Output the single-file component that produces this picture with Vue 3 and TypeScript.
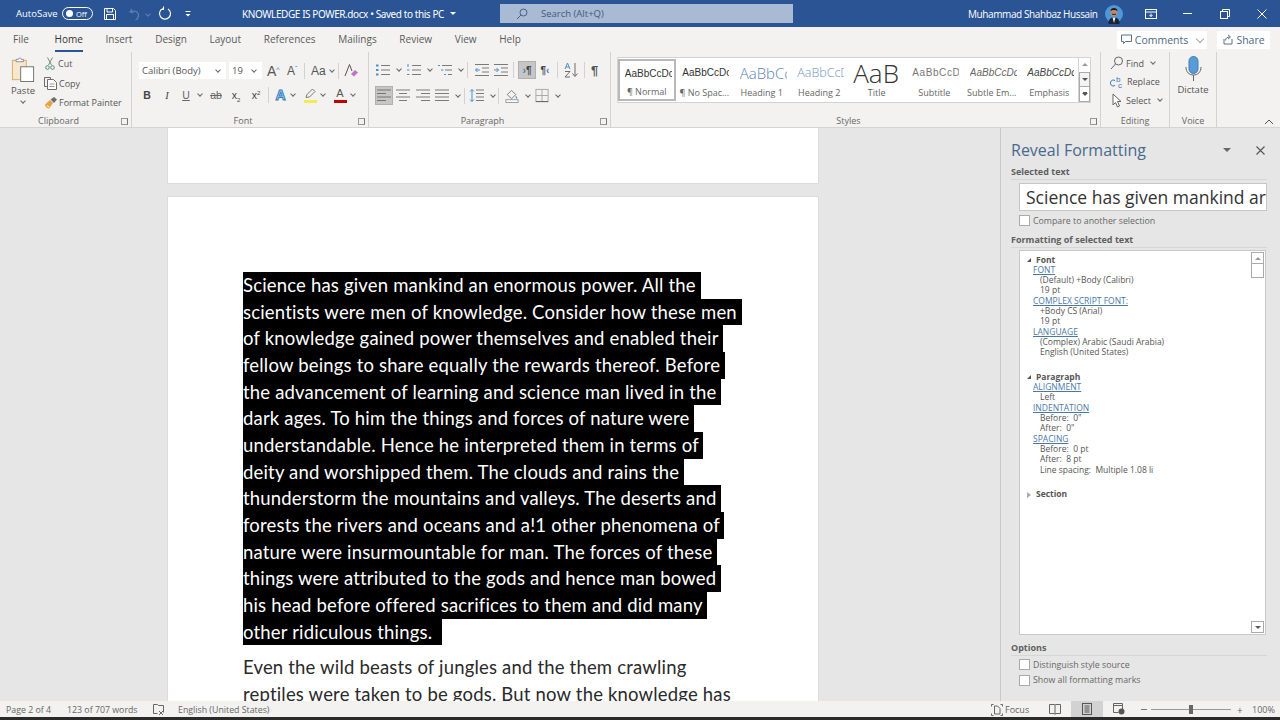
<script setup lang="ts">
const tabs = ['File', 'Home', 'Insert', 'Design', 'Layout', 'References', 'Mailings', 'Review', 'View', 'Help']

const styles = [
  { name: '¶ Normal', sample: 'AaBbCcDc', cls: 's-normal', active: true },
  { name: '¶ No Spac...', sample: 'AaBbCcDc', cls: 's-normal', active: false },
  { name: 'Heading 1', sample: 'AaBbCc', cls: 's-h1', active: false },
  { name: 'Heading 2', sample: 'AaBbCcD', cls: 's-h2', active: false },
  { name: 'Title', sample: 'AaB', cls: 's-title', active: false },
  { name: 'Subtitle', sample: 'AaBbCcD', cls: 's-sub', active: false },
  { name: 'Subtle Em...', sample: 'AaBbCcDc', cls: 's-em', active: false },
  { name: 'Emphasis', sample: 'AaBbCcDc', cls: 's-emph', active: false },
]

const selectedLines = [
  'Science has given mankind an enormous power. All the ',
  'scientists were men of knowledge. Consider how these men ',
  'of knowledge gained power themselves and enabled their ',
  'fellow beings to share equally the rewards thereof. Before ',
  'the advancement of learning and science man lived in the ',
  'dark ages. To him the things and forces of nature were ',
  'understandable. Hence he interpreted them in terms of ',
  'deity and worshipped them. The clouds and rains the ',
  'thunderstorm the mountains and valleys. The deserts and ',
  'forests the rivers and oceans and a!1 other phenomena of ',
  'nature were insurmountable for man. The forces of these ',
  'things were attributed to the gods and hence man bowed ',
  'his head before offered sacrifices to them and did many ',
  'other ridiculous things.  ',
]

const restLines = [
  'Even the wild beasts of jungles and the them crawling',
  'reptiles were taken to be gods. But now the knowledge has',
]

const fontDetails = [
  { text: 'FONT', link: true },
  { text: '(Default) +Body (Calibri)', link: false },
  { text: '19 pt', link: false },
  { text: 'COMPLEX SCRIPT FONT:', link: true },
  { text: '+Body CS (Arial)', link: false },
  { text: '19 pt', link: false },
  { text: 'LANGUAGE', link: true },
  { text: '(Complex) Arabic (Saudi Arabia)', link: false },
  { text: 'English (United States)', link: false },
]

const paragraphDetails = [
  { text: 'ALIGNMENT', link: true },
  { text: 'Left', link: false },
  { text: 'INDENTATION', link: true },
  { text: 'Before:  0"', link: false },
  { text: 'After:  0"', link: false },
  { text: 'SPACING', link: true },
  { text: 'Before:  0 pt', link: false },
  { text: 'After:  8 pt', link: false },
  { text: 'Line spacing:  Multiple 1.08 li', link: false },
]
</script>

<template>
  <div class="app">
    <header class="titlebar">
      <span class="autosave">AutoSave</span>
      <span class="toggle"><i class="toggle-dot"></i>Off</span>
      <svg class="tb-save" width="14" height="14" viewBox="0 0 14 14" fill="none" stroke="#fff" stroke-width="1">
        <path d="M1.5 1.5h9l2 2v9h-11z" />
        <path d="M4 1.5v3.5h5.5v-3.5M3.5 12.5v-5h7v5" />
      </svg>
      <svg class="tb-undo" width="14" height="14" viewBox="0 0 14 14" fill="none" stroke="#5f80b4" stroke-width="1.2">
        <path d="M4 2L2 5l3.500 1M2.500 5c4-2 8-.5 8 3.500 0 2-1 3.500-3 4.500" />
      </svg>
      <i class="chev tb-undo-chev"></i>
      <svg class="tb-redo" width="15" height="15" viewBox="0 0 15 15" fill="none" stroke="#fff" stroke-width="1.100">
        <path d="M5 2.500A5.500 5.500 0 1 0 10 3M5.500 0.500v3h-3" />
      </svg>
      <svg class="tb-custom" width="8" height="8" viewBox="0 0 8 8" fill="#fff">
        <rect x="1.500" y="1" width="5" height="1" />
        <path d="M1.500 4h5L4 6.500z" />
      </svg>
      <span class="doc-title">KNOWLEDGE IS POWER.docx &bull; Saved to this PC</span>
      <i class="chev-solid"></i>
      <div class="search">
        <svg width="12" height="12" viewBox="0 0 12 12" fill="none" stroke="#4a6186" stroke-width="1">
          <circle cx="7.500" cy="4.500" r="3.500" />
          <path d="M5 7L1 11" />
        </svg>
        <span>Search (Alt+Q)</span>
      </div>
      <span class="username">Muhammad Shahbaz Hussain</span>
      <svg class="avatar" width="18" height="20" viewBox="0 0 18 20">
        <circle cx="9" cy="10" r="9" fill="#4e97d8" />
        <path d="M3.500 20c0-5 2-6.500 5.500-6.500s5.500 1.500 5.500 6.500z" fill="#1b2433" />
        <path d="M7.500 13.500h3L9 19z" fill="#f2f2f2" />
        <ellipse cx="9" cy="8" rx="3.400" ry="4.600" fill="#b98a6b" />
        <path d="M5.500 7c0-4 7-4 7 0-1.500-1.500-5.500-1.500-7 0z" fill="#1a1a1a" />
        <rect x="7" y="9.800" width="4" height="1" fill="#2a2a2a" />
      </svg>
      <svg class="win-ribbon" width="12" height="10" viewBox="0 0 12 10" fill="none" stroke="#fff">
        <rect x="0.500" y="0.500" width="11" height="9" />
        <path d="M0.500 3h11M6 4.500v3M4.500 6L6 7.500 7.500 6" />
      </svg>
      <span class="win-min"></span>
      <svg class="win-restore" width="10" height="10" viewBox="0 0 10 10" fill="none" stroke="#fff">
        <rect x="0.500" y="2.500" width="7" height="7" />
        <path d="M2.500 2.500v-2h7v7h-2" />
      </svg>
      <svg class="win-close" width="10" height="10" viewBox="0 0 10 10" stroke="#fff">
        <path d="M0.500 0.500l9 9M9.500 0.500l-9 9" />
      </svg>
    </header>

    <nav class="tabs">
      <span v-for="t in tabs" :key="t" class="tab" :class="{ active: t === 'Home' }">{{ t }}</span>
      <div class="tab-actions">
        <button class="btn-comments">
          <svg width="11" height="11" viewBox="0 0 11 11" fill="none" stroke="#5c6f87">
            <path d="M0.500 1h10v6.500h-6l-2 2v-2h-2z" />
          </svg>
          Comments
          <i class="chev chev-light"></i>
        </button>
        <button class="btn-share">
          <svg width="11" height="11" viewBox="0 0 11 11" fill="none" stroke="#5c6f87">
            <path d="M2 5v5h8V5M3.500 6.500c0-2.500 2-3.500 4-3.500M6 0.800L8.500 3 6 5" />
          </svg>
          Share
        </button>
      </div>
    </nav>

    <section class="ribbon">
      <div class="group g-clipboard">
        <div class="group-body clip-body">
          <div class="paste">
            <svg width="24" height="26" viewBox="0 0 26 28" fill="none">
              <rect x="1.500" y="3.500" width="15" height="21" fill="#f6e8cf" stroke="#d9a860" />
              <path d="M5.500 5V2.500h2.500a1.500 1.500 0 0 1 3 0h2.500V5z" fill="#fff" stroke="#8a8a8a" />
              <rect x="10.500" y="10.500" width="14" height="16" fill="#fff" stroke="#6d6d6d" />
            </svg>
            <span>Paste</span>
            <i class="chev"></i>
          </div>
          <div class="clip-list">
            <div class="clip-item">
              <svg width="12" height="13" viewBox="0 0 12 13" fill="none" stroke="#7d8a7d">
                <path d="M3.500 0.500L7.500 8M8.500 0.500L4.500 8" />
                <circle cx="3.500" cy="10.500" r="1.800" stroke="#4f8f78" />
                <circle cx="8.500" cy="10.500" r="1.800" stroke="#4f8f78" />
              </svg>
              <span class="cut-t">Cut</span>
            </div>
            <div class="clip-item">
              <svg width="14" height="13" viewBox="0 0 14 13" fill="none" stroke="#6d6d6d">
                <path d="M3.500 9.500h-3v-9h6v2" />
                <path d="M3.500 2.500h6l3 3v7h-9z" fill="#fff" />
                <path d="M5.500 7h5M5.500 9.500h5" stroke="#9c9c9c" />
              </svg>
              <span>Copy</span>
            </div>
            <div class="clip-item">
              <svg width="14" height="13" viewBox="0 0 14 13">
                <path d="M1 8.500L6 4l3 3-4 5.500c-2 0-4-2-4-4z" fill="#e8a33d" />
                <path d="M6.500 3.500L10 1l3 2.500-3 3.500z" fill="#6d6d6d" />
                <path d="M3 9.500l2 1.500" stroke="#fff" />
              </svg>
              <span>Format Painter</span>
            </div>
          </div>
        </div>
        <div class="group-label">Clipboard<i class="launcher"></i></div>
      </div>

      <div class="group g-font">
        <div class="group-body stack">
          <div class="row row-top">
            <div class="combo combo-font">Calibri (Body)<i class="chev"></i></div>
            <div class="combo combo-size">19<i class="chev"></i></div>
            <span class="glyph big a-up">A<sup>^</sup></span>
            <span class="glyph mid a-down">A<sup>ˇ</sup></span>
            <i class="sep s-case"></i>
            <span class="glyph case">Aa</span><i class="chev"></i>
            <i class="sep s-clear"></i>
            <svg class="clear-i" width="15" height="15" viewBox="0 0 15 15" fill="none">
              <path d="M1 13L5.500 1.500 8 8" stroke="#555" />
              <path d="M7 11l4-4 3 2.500-4 4z" fill="#c074c8" />
            </svg>
          </div>
          <div class="row row-bottom">
            <span class="fmt bold">B</span>
            <span class="fmt ital">I</span>
            <span class="fmt under">U</span><i class="chev"></i>
            <span class="fmt strike">ab</span>
            <span class="fmt script">x<sub>2</sub></span>
            <span class="fmt script">x<sup>2</sup></span>
            <i class="sep s-effects"></i>
            <span class="fx">A</span><i class="chev"></i>
            <span class="col-a">
              <svg width="14" height="11" viewBox="0 0 14 11" fill="none" stroke="#7a7a7a">
                <path d="M3 9.500l1-3L9.500 1l2.500 2.500L6.500 9z" />
              </svg>
              <b class="bar yellow"></b>
            </span>
            <i class="chev"></i>
            <span class="col-a letter">A<b class="bar red"></b></span>
            <i class="chev"></i>
          </div>
        </div>
        <div class="group-label">Font<i class="launcher"></i></div>
      </div>

      <div class="group g-para">
        <div class="group-body stack">
          <div class="row para-top">
            <svg class="i" viewBox="0 0 16 14" fill="none" stroke="#666">
              <path d="M6 2.500h9M6 7h9M6 11.500h9" />
              <path d="M1 2.500h2.500M1 7h2.500M1 11.500h2.500" stroke="#2f7fc1" stroke-width="2" />
            </svg>
            <i class="chev"></i>
            <svg class="i" viewBox="0 0 16 14" fill="none" stroke="#666">
              <path d="M6 2.500h9M6 7h9M6 11.500h9" />
              <path d="M2 1v3M1 7h2.500M1 11.500h2.500" stroke="#2f7fc1" />
            </svg>
            <i class="chev"></i>
            <svg class="i" viewBox="0 0 16 14" fill="none" stroke="#666">
              <path d="M5 2.500h10M8 7h7M11 11.500h4" />
              <path d="M1 2.500h2M4 7h2.500M7 11.500h2" stroke="#2f7fc1" />
            </svg>
            <i class="chev"></i>
            <i class="sep s-indent"></i>
            <svg class="i" viewBox="0 0 16 14" fill="none" stroke="#666">
              <path d="M1 1.500h14M8 5h7M8 9h7M1 12.500h14" />
              <path d="M6 7H1.500M3.500 5l-2 2 2 2" stroke="#2f7fc1" />
            </svg>
            <svg class="i i-gap" viewBox="0 0 16 14" fill="none" stroke="#666">
              <path d="M1 1.500h14M8 5h7M8 9h7M1 12.500h14" />
              <path d="M1 7h4.500M3.500 5l2 2-2 2" stroke="#2f7fc1" />
            </svg>
            <i class="sep s-ltr"></i>
            <span class="pressed dir"><em class="arrow-b">›</em>¶</span>
            <span class="dir rtl">¶<em class="arrow-b">‹</em></span>
            <i class="sep s-sort"></i>
            <svg class="i sort" viewBox="0 0 16 16" fill="none">
              <path d="M12 1v13M9.500 11.500l2.500 3 2.500-3" stroke="#555" />
              <path d="M2 7l2.500-6L7 7M3 5h3" stroke="#2f7fc1" />
              <path d="M2 9.500h5L2 15h5" stroke="#555" />
            </svg>
            <i class="sep s-pil"></i>
            <span class="pil">¶</span>
          </div>
          <div class="row para-bottom">
            <span class="pressed align">
              <svg class="i" viewBox="0 0 16 14" fill="none" stroke="#666"><path d="M1 1.500h14M1 5h9M1 8.500h14M1 12h9" /></svg>
            </span>
            <svg class="i a-c" viewBox="0 0 16 14" fill="none" stroke="#666"><path d="M1 1.500h14M4 5h8M1 8.500h14M4 12h8" /></svg>
            <svg class="i a-r" viewBox="0 0 16 14" fill="none" stroke="#666"><path d="M1 1.500h14M6 5h9M1 8.500h14M6 12h9" /></svg>
            <svg class="i a-j" viewBox="0 0 16 14" fill="none" stroke="#666"><path d="M1 1.500h14M1 5h14M1 8.500h14M1 12h14" /></svg>
            <i class="chev"></i>
            <i class="sep s-line"></i>
            <svg class="i" viewBox="0 0 16 14" fill="none" stroke="#666">
              <path d="M7 1.500h8M7 5h8M7 8.500h8M7 12h8" />
              <path d="M3 1v12M1 3l2-2 2 2M1 11l2 2 2-2" stroke="#2f7fc1" />
            </svg>
            <i class="chev"></i>
            <i class="sep s-shade"></i>
            <svg class="i" viewBox="0 0 16 16" fill="none">
              <path d="M3 7l4.500-4.500L12 7l-4.500 4.500z" stroke="#666" />
              <path d="M12 8c1 1.500 2 2 1.500 3s-2 .5-1.500-3z" fill="#2f7fc1" />
              <rect x="1.500" y="12.500" width="13" height="3" stroke="#888" fill="#fff" />
            </svg>
            <i class="chev"></i>
            <svg class="i i-border" viewBox="0 0 16 16" fill="none" stroke="#9a9a9a">
              <rect x="1.500" y="1.500" width="13" height="13" />
              <path d="M8 1.500v13M1.500 8h13" />
              <path d="M1.500 14.500h13" stroke="#444" />
            </svg>
            <i class="chev"></i>
          </div>
        </div>
        <div class="group-label">Paragraph<i class="launcher"></i></div>
      </div>

      <div class="group g-styles">
        <div class="group-body gallery-wrap">
          <div class="gallery">
            <div v-for="s in styles" :key="s.name + s.cls" class="style-cell" :class="{ selected: s.active }">
              <span class="style-sample" :class="s.cls">{{ s.sample }}</span>
              <span class="style-name">{{ s.name }}</span>
            </div>
            <div class="gallery-scroll">
              <span class="up"><i class="tri-up"></i></span>
              <span class="mid-b"><i class="tri-down"></i></span>
              <span class="more"><i class="tri-more"></i></span>
            </div>
          </div>
        </div>
        <div class="group-label">Styles<i class="launcher"></i></div>
      </div>

      <div class="group g-edit">
        <div class="group-body edit-list">
          <div class="edit-item">
            <svg width="14" height="14" viewBox="0 0 14 14" fill="none" stroke="#666">
              <circle cx="8.500" cy="5" r="4" />
              <path d="M5.500 8L1 13" />
            </svg>
            <span>Find</span><i class="chev"></i>
          </div>
          <div class="edit-item replace">
            <svg width="14" height="14" viewBox="0 0 14 14" fill="none">
              <path d="M5 5.500a3 3 0 1 0 0 5" stroke="#2f7fc1" />
              <text x="6" y="7" font-size="8" fill="#2f7fc1" font-family="Liberation Sans">b</text>
              <text x="8" y="13" font-size="8" fill="#2f7fc1" font-family="Liberation Sans">c</text>
            </svg>
            <span>Replace</span>
          </div>
          <div class="edit-item">
            <svg width="14" height="15" viewBox="0 0 14 15" fill="#fff" stroke="#666">
              <path d="M3 1l8 7.500H7.500l2 4.500-2 1-2-4.500L3 12z" />
            </svg>
            <span>Select</span><i class="chev"></i>
          </div>
        </div>
        <div class="group-label plain">Editing</div>
      </div>

      <div class="group g-voice">
        <div class="group-body voice">
          <svg width="18" height="26" viewBox="0 0 18 26" fill="none">
            <rect x="5" y="0.500" width="9" height="17" rx="4.500" fill="#5b9bd5" stroke="#3f7fb8" />
            <path d="M2 11c0 5 3 8 7.500 8s7.500-3 7.500-8M9.500 19v6" stroke="#666" />
          </svg>
          <span>Dictate</span>
        </div>
        <div class="group-label plain">Voice</div>
      </div>

      <svg class="collapse" width="10" height="6" viewBox="0 0 10 6" fill="none" stroke="#555">
        <path d="M1 5l4-4 4 4" />
      </svg>
    </section>

    <main class="workspace">
      <div class="doc-area">
        <div class="page page-prev"></div>
        <div class="page page-cur">
          <div class="para para-sel">
            <span v-for="(l, i) in selectedLines" :key="i" class="sel-line">{{ l }}</span>
          </div>
          <div class="para">
            <span v-for="(l, i) in restLines" :key="i" class="plain-line">{{ l }}</span>
          </div>
        </div>
      </div>

      <aside class="pane">
        <div class="pane-head">
          <h2>Reveal Formatting</h2>
          <i class="chev-solid dark"></i>
          <svg width="9" height="9" viewBox="0 0 9 9" stroke="#555" stroke-width="1.100">
            <path d="M0.500 0.500l8 8M8.500 0.500l-8 8" />
          </svg>
        </div>

        <h3 class="pane-sec">Selected text</h3>
        <div class="sample-box">Science has given mankind ar</div>
        <label class="check compare"><i class="box"></i>Compare to another selection</label>

        <h3 class="pane-sec fmt-sec">Formatting of selected text</h3>
        <div class="details">
          <div class="details-inner">
            <div class="d-head"><i class="tri-open"></i>Font</div>
            <div v-for="d in fontDetails" :key="d.text + 'f'" :class="d.link ? 'd-link' : 'd-val'">{{ d.text }}</div>
            <div class="d-head d-next"><i class="tri-open"></i>Paragraph</div>
            <div v-for="d in paragraphDetails" :key="d.text + 'p'" :class="d.link ? 'd-link' : 'd-val'">{{ d.text }}</div>
            <div class="d-head d-next"><i class="tri-closed"></i>Section</div>
          </div>
          <div class="details-scroll">
            <span class="sb-btn"><i class="tri-up"></i></span>
            <span class="sb-thumb"></span>
            <span class="sb-space"></span>
            <span class="sb-btn"><i class="tri-down"></i></span>
          </div>
        </div>

        <h3 class="pane-sec opt-sec">Options</h3>
        <label class="check opt"><i class="box"></i>Distinguish style source</label>
        <label class="check opt"><i class="box"></i>Show all formatting marks</label>
      </aside>
    </main>

    <footer class="status">
      <span class="st-page">Page 2 of 4</span>
      <span class="st-words">123 of 707 words</span>
      <svg class="st-proof" width="11" height="12" viewBox="0 0 11 12" fill="none" stroke="#666">
        <path d="M0.500 0.500h4l1 1h5v7M0.500 0.500v9h4" />
        <path d="M6 7l4 4M10 7l-4 4" />
      </svg>
      <span class="st-lang">English (United States)</span>
      <div class="st-right">
        <svg width="12" height="12" viewBox="0 0 12 12" fill="none" stroke="#666">
          <path d="M3.500 2h3l2.500 2.500V10h-5.500z" />
          <path d="M0.500 2.500v-2h2M11.500 2.500v-2h-2M0.500 9.500v2h2M11.500 9.500v2h-2" />
        </svg>
        <span class="st-focus">Focus</span>
        <span class="view-btn v-read">
          <svg width="12" height="11" viewBox="0 0 12 11" fill="none" stroke="#666">
            <path d="M0.500 0.500h5l.5 1 .5-1h5v9h-5l-.5 1-.5-1h-5zM6 1.500v8" />
          </svg>
        </span>
        <span class="view-btn v-print">
          <svg width="10" height="12" viewBox="0 0 10 12" fill="none" stroke="#555">
            <rect x="0.500" y="0.500" width="9" height="11" />
            <path d="M2.500 3h5M2.500 5h5M2.500 7h5M2.500 9h5" />
          </svg>
        </span>
        <span class="view-btn v-web">
          <svg width="12" height="12" viewBox="0 0 12 12" fill="none" stroke="#666">
            <path d="M0.500 0.500h9v6M0.500 0.500v9h5M0.500 2.500h9" />
            <circle cx="8.500" cy="8.500" r="3" fill="#555" stroke="none" />
          </svg>
        </span>
        <span class="zoom-minus"></span>
        <div class="slider"><i class="thumb"></i></div>
        <span class="zoom-plus">+</span>
        <span class="zoom-val">100%</span>
      </div>
    </footer>
    <div class="bottom-strip"></div>
  </div>
</template>

<style scoped>
.app {
  width: 1280px;
  height: 720px;
  display: flex;
  flex-direction: column;
  overflow: hidden;
  font-family: "Open Sans", "Liberation Sans", sans-serif;
  color: #555;
  background: #e6e6e6;
}
i {
  display: block;
  font-style: normal;
  flex: none;
}
.chev {
  width: 3px;
  height: 3px;
  border-right: 1px solid #666;
  border-bottom: 1px solid #666;
  transform: rotate(45deg);
}
.chev-light {
  width: 5px;
  height: 5px;
  border-color: #a8a8a8;
}
.chev-solid {
  width: 0;
  height: 0;
  border-left: 3px solid transparent;
  border-right: 3px solid transparent;
  border-top: 3px solid #fff;
}
.chev-solid.dark {
  border-top-color: #666;
  border-left-width: 4px;
  border-right-width: 4px;
  border-top-width: 4px;
}

/* title bar */
.titlebar {
  height: 27px;
  flex: none;
  display: flex;
  align-items: center;
  background: #2a5494;
  color: #fff;
  padding-left: 16px;
  font-size: 10.500px;
}
.autosave {
  width: 46px;
  font-size: 9.500px;
}
.toggle {
  width: 31px;
  height: 13px;
  border: 1px solid #fff;
  border-radius: 7px;
  display: flex;
  align-items: center;
  gap: 3px;
  padding-left: 3px;
  box-sizing: border-box;
  font-size: 7.500px;
}
.toggle-dot {
  width: 7px;
  height: 7px;
  border-radius: 50%;
  background: #fff;
}
.tb-save { margin-left: 10px; }
.tb-undo { margin-left: 11px; }
.tb-undo-chev {
  margin-left: 4px;
  border-color: #5f80b4;
}
.tb-redo { margin-left: 8px; }
.tb-custom { margin-left: 11px; }
.doc-title {
  margin-left: 50px;
  font-family: "Noto Sans", sans-serif;
  font-size: 10px;
  letter-spacing: -0.420px;
  width: 208px;
  white-space: nowrap;
}
.search {
  margin-left: 44px;
  width: 293px;
  height: 19px;
  background: #a9bad4;
  display: flex;
  align-items: center;
  gap: 13px;
  padding-left: 16px;
  box-sizing: border-box;
  color: #44597c;
  font-size: 9.500px;
}
.username {
  margin-left: 175px;
  width: 130px;
  white-space: nowrap;
  font-size: 10px;
  letter-spacing: -0.400px;
}
.avatar { margin-left: 7px; }
.win-ribbon { margin-left: 22px; }
.win-min {
  width: 9px;
  height: 1px;
  background: #fff;
  margin-left: 26px;
}
.win-restore { margin-left: 28px; }
.win-close { margin-left: 27px; }

/* tabs */
.tabs {
  height: 25px;
  flex: none;
  display: flex;
  align-items: center;
  gap: 22.700px;
  padding-left: 13px;
  background: #f3f2f1;
  font-size: 10px;
  color: #5a5a5a;
}
.tab {
  height: 25px;
  line-height: 25px;
  box-sizing: border-box;
  white-space: nowrap;
}
.tab.active {
  color: #333;
  border-bottom: 2px solid #2a5494;
  margin-left: 3px;
}
.tab-actions {
  margin-left: auto;
  display: flex;
  gap: 10px;
  padding-right: 10px;
}
.tab-actions button {
  height: 18px;
  border: 0;
  background: #fff;
  font-family: inherit;
  font-size: 10.500px;
  color: #4f6785;
  display: flex;
  align-items: center;
  gap: 3px;
  padding: 0;
}
.btn-comments {
  width: 90px;
  justify-content: center;
}
.btn-comments .chev { margin: -2px 0 0 6px; }
.btn-share {
  width: 53px;
  justify-content: center;
}

/* ribbon */
.ribbon {
  height: 76px;
  flex: none;
  display: flex;
  position: relative;
  background: #f3f2f1;
  border-bottom: 1px solid #d4d4d4;
  box-sizing: border-box;
  font-size: 9.500px;
}
.group {
  display: flex;
  flex-direction: column;
  border-right: 1px solid #d3d2d0;
  box-sizing: border-box;
}
.group-body { flex: 1; min-height: 0; }
.group-label {
  height: 14px;
  line-height: 16px;
  text-align: center;
  position: relative;
  font-size: 9px;
  color: #666;
  padding-right: 14px;
}
.launcher {
  position: absolute;
  right: 3px;
  top: 5px;
  width: 7px;
  height: 7px;
  border: 1px solid #999;
  border-right-color: #777;
  box-sizing: border-box;
}
.g-clipboard { width: 132px; }
.g-font { width: 237px; }
.g-para { width: 242px; }
.g-styles { width: 490px; }
.g-edit { width: 69px; }
.g-voice { width: 47px; }

/* clipboard */
.clip-body {
  display: flex;
  padding-left: 10px;
}
.paste {
  width: 26px;
  display: flex;
  flex-direction: column;
  align-items: center;
  padding-top: 5px;
  font-size: 9.500px;
}
.paste span { margin-top: 1px; line-height: 14px; }
.paste .chev { margin-top: 1px; }
.clip-list {
  margin-left: 8px;
  display: flex;
  flex-direction: column;
  padding-top: 2px;
  font-size: 9px;
}
.clip-item {
  height: 19.500px;
  display: flex;
  align-items: center;
  gap: 1px;
  white-space: nowrap;
}
.cut-t { margin-left: 1px; }

/* shared stacks */
.stack {
  display: flex;
  flex-direction: column;
}
.row {
  display: flex;
  align-items: center;
}
.sep {
  width: 1px;
  height: 16px;
  background: #d3d2d0;
}

/* font group */
.row-top {
  margin-top: 10px;
  height: 17px;
  padding-left: 7px;
}
.combo {
  height: 17px;
  background: #fff;
  display: flex;
  align-items: center;
  justify-content: space-between;
  box-sizing: border-box;
  padding: 0 6px 0 3px;
  font-size: 9.500px;
  color: #555;
}
.combo .chev { margin-top: -2px; }
.combo-font { width: 87px; }
.combo-size {
  width: 33px;
  margin-left: 3px;
}
.glyph {
  font-family: "Liberation Sans", sans-serif;
  color: #555;
  line-height: 1;
}
.glyph sup {
  font-size: 7px;
  vertical-align: 4px;
  line-height: 0;
  color: #2f7fc1;
}
.big { font-size: 14px; margin-left: 5px; width: 18px; }
.mid { font-size: 12px; margin-left: 2px; width: 16px; }
.s-case { margin: 0 6px 0 1px; }
.case { font-size: 12px; width: 17px; }
.row-top .chev { margin: -2px 0 0 2px; }
.s-clear { margin: 0 5px 0 4px; }
.row-bottom {
  margin-top: 7px;
  height: 18px;
  padding-left: 5px;
}
.row-bottom .chev { margin: -2px 3px 0 3px; }
.fmt {
  width: 20px;
  text-align: center;
  font-family: "Liberation Sans", sans-serif;
  font-size: 10.500px;
  color: #444;
}
.bold { font-weight: 700; }
.ital { font-family: "Liberation Serif", serif; font-style: italic; }
.under {
  text-decoration: underline;
  width: 18px;
  color: #666;
}
.strike {
  text-decoration: line-through;
  margin-left: 1px;
  color: #666;
}
.script sub, .script sup {
  font-size: 6px;
  line-height: 0;
}
.s-effects { margin: 0 4px 0 2px; }
.fx {
  width: 15px;
  text-align: center;
  font-family: "Liberation Sans", sans-serif;
  font-weight: 700;
  font-size: 14px;
  color: #bcd8f0;
  -webkit-text-stroke: 1px #2f7fc1;
}
.col-a {
  width: 16px;
  margin-left: 4px;
  display: flex;
  flex-direction: column;
  align-items: center;
  line-height: 1;
}
.letter {
  font-family: "Liberation Sans", sans-serif;
  font-size: 11px;
  color: #555;
}
.bar {
  display: block;
  width: 13px;
  height: 3px;
  margin-top: 1px;
}
.yellow { background: #f4ec4f; }
.red { background: #c00000; }

/* paragraph group */
.i {
  width: 16px;
  height: 14px;
  flex: none;
  opacity: 0.85;
}
.para-top {
  margin-top: 9px;
  height: 18px;
  padding-left: 6px;
}
.para-top .chev, .para-bottom .chev { margin: -2px 5px 0 6px; }
.s-indent { margin: 0 6px 0 -1px; }
.i-gap { margin-left: 3px; }
.s-ltr { margin: 0 4px 0 4px; }
.pressed {
  background: #c6c6c6;
  border: 1px solid #b0b0b0;
  box-sizing: border-box;
}
.dir {
  width: 18px;
  height: 18px;
  display: flex;
  align-items: center;
  justify-content: center;
  font-size: 10px;
  font-weight: 700;
  color: #444;
  font-family: "Liberation Sans", sans-serif;
}
.rtl { margin-left: 0; }
.arrow-b {
  color: #2f7fc1;
  font-style: normal;
}
.s-sort { margin: 0 5px 0 3px; }
.sort { height: 16px; }
.s-pil { margin: 0 6px 0 5px; }
.pil {
  font-family: "Liberation Sans", sans-serif;
  font-weight: 700;
  font-size: 13px;
  color: #555;
}
.para-bottom {
  margin-top: 7px;
  height: 19px;
  padding-left: 6px;
}
.align {
  width: 18px;
  height: 19px;
  display: flex;
  align-items: center;
  justify-content: center;
}
.a-c { margin-left: 2px; }
.a-r { margin-left: 4px; }
.a-j { margin-left: 3px; }
.s-line { margin: 0 4px 0 -1px; }
.s-shade { margin: 0 5px 0 -2px; }
.para-bottom .i { height: 15px; }
.i-border { margin-left: -1px; }

/* styles gallery */
.gallery-wrap { padding: 5px 0 0 6px; }
.gallery {
  width: 474px;
  height: 46px;
  background: #fff;
  border: 1px solid #d3d3d3;
  display: flex;
  box-sizing: border-box;
}
.style-cell {
  width: 57.500px;
  flex: none;
  box-sizing: border-box;
  display: flex;
  flex-direction: column;
  align-items: center;
  overflow: hidden;
  padding-top: 2px;
}
.style-cell.selected {
  border: 2px solid #b9b9b9;
  padding-top: 0;
  height: 42px;
  margin-top: 1px;
}
.style-sample {
  height: 26px;
  line-height: 26px;
  white-space: nowrap;
  width: 47px;
  margin-left: 3px;
  overflow: hidden;
  text-align: left;
  color: #333;
  font-family: "Liberation Sans", sans-serif;
  font-size: 10px;
}
.style-name {
  font-size: 9px;
  line-height: 14px;
  margin-top: 0;
  color: #666;
  white-space: nowrap;
}
.s-h1 { font-size: 15px; color: #5a7fb5; font-family: "Open Sans", sans-serif; font-weight: 300; }
.s-h2 { font-size: 12.500px; color: #7393c0; font-family: "Open Sans", sans-serif; font-weight: 300; }
.s-title { font-size: 26px; color: #333; width: 50px; font-family: "Open Sans", sans-serif; font-weight: 300; }
.s-sub { color: #777; letter-spacing: 0.600px; }
.s-em { color: #666; font-style: italic; }
.s-emph { color: #444; font-style: italic; }
.gallery-scroll {
  width: 11px;
  margin-left: auto;
  display: flex;
  flex-direction: column;
  border-left: 1px solid #d3d3d3;
  box-sizing: content-box;
}
.gallery-scroll span {
  flex: 1;
  display: flex;
  align-items: center;
  justify-content: center;
  background: #fff;
}
.gallery-scroll .mid-b {
  border: 1px solid #aaa;
  background: #f3f3f3;
}
.gallery-scroll .more {
  border: 1px solid #aaa;
  border-top: 0;
}
.tri-up, .tri-down, .tri-more {
  width: 0;
  height: 0;
  border-left: 3px solid transparent;
  border-right: 3px solid transparent;
}
.tri-up { border-bottom: 3px solid #999; }
.tri-down { border-top: 3px solid #555; }
.tri-more { border-top: 3px solid #555; box-shadow: 0 -2px 0 -1px #555; }

/* editing */
.edit-list {
  display: flex;
  flex-direction: column;
  padding: 2px 0 0 9px;
  font-size: 9px;
}
.edit-item {
  height: 18.500px;
  display: flex;
  align-items: center;
  gap: 2px;
}
.edit-item .chev { margin: -2px 0 0 5px; }
.replace span { margin-left: 1px; }
.voice {
  display: flex;
  flex-direction: column;
  align-items: center;
  padding-top: 4px;
}
.voice span { line-height: 12px; margin-top: 2px; }
.group-label.plain { font-size: 9px; padding-right: 0; }
.collapse {
  position: absolute;
  right: 6px;
  bottom: 2px;
}

/* document */
.workspace {
  flex: 1;
  min-height: 0;
  display: flex;
}
.doc-area {
  width: 1000px;
  flex: none;
  overflow: hidden;
  padding-right: 14px;
  box-sizing: border-box;
  display: flex;
  flex-direction: column;
  align-items: center;
  background: #e6e6e6;
}
.page {
  width: 652px;
  flex: none;
  background: #fff;
  box-sizing: border-box;
  border: 1px solid #dcdcdc;
}
.page-prev {
  height: 56px;
  border-top: 0;
}
.page-cur {
  margin-top: 12px;
  padding: 75px 0 0 75px;
  height: 800px;
}
.para {
  font-family: "Lato", "Liberation Sans", sans-serif;
  font-size: 18.500px;
  letter-spacing: 0.180px;
  line-height: 26.650px;
  color: #2a2a2a;
  margin-bottom: 9px;
}
.sel-line, .plain-line {
  display: block;
  white-space: pre;
  width: fit-content;
}
.sel-line {
  background: #000;
  color: #fff;
}

/* reveal formatting pane */
.pane {
  flex: 1;
  min-width: 0;
  border-left: 1px solid #c8c8c8;
  display: flex;
  flex-direction: column;
  padding: 0 13px 0 10px;
  background: #e6e6e6;
}
.pane-head {
  height: 36px;
  display: flex;
  align-items: center;
  padding-top: 8px;
  box-sizing: border-box;
}
.pane-head h2 {
  margin: 0;
  font-weight: 400;
  font-size: 16px;
  line-height: 20px;
  color: #486a8c;
  flex: 1;
}
.pane-head .chev-solid { margin-right: 25px; }
.pane-head svg { margin-right: 2px; }
.pane-sec {
  margin: 0;
  font-size: 9px;
  line-height: 12px;
  font-weight: 700;
  color: #5f5f5f;
  border-bottom: 1px solid #d6d6d6;
  height: 13px;
  box-sizing: content-box;
  padding-top: 2px;
}
.sample-box {
  margin: 3px 0 0 8px;
  height: 28px;
  background: #fff;
  border: 1px solid #c6c6c6;
  box-sizing: border-box;
  line-height: 26px;
  padding-left: 6px;
  font-size: 17.500px;
  white-space: nowrap;
  overflow: hidden;
  color: #333;
}
.check {
  display: flex;
  align-items: center;
  gap: 3px;
  font-size: 8.800px;
  color: #666;
  margin-left: 8px;
}
.box {
  width: 9px;
  height: 9px;
  background: #fff;
  border: 1px solid #aaa;
}
.compare {
  margin-top: 4px;
  height: 11px;
}
.fmt-sec { margin-top: 6px; }
.details {
  margin: 2px 1px 0 8px;
  height: 385px;
  flex: none;
  background: #fff;
  border: 1px solid #c9c9c9;
  box-sizing: border-box;
  display: flex;
}
.details-inner {
  flex: 1;
  padding: 3.500px 0 0 6px;
  font-size: 8.500px;
  line-height: 10.330px;
  color: #555;
}
.d-head {
  font-weight: 700;
  color: #555;
  padding-left: 9px;
  position: relative;
  margin-left: 1px;
  font-size: 8.500px;
  margin-top: 0;
}
.d-head i { position: absolute; left: 0; top: 3px; }
.d-next { margin-top: 14px; }
.tri-open {
  width: 0;
  height: 0;
  border-left: 4px solid transparent;
  border-bottom: 4px solid #555;
}
.tri-closed {
  width: 0;
  height: 0;
  border-top: 3px solid transparent;
  border-bottom: 3px solid transparent;
  border-left: 4px solid #aaa;
}
.d-link {
  margin-left: 7px;
  color: #4a78a8;
  text-decoration: underline;
}
.d-val {
  margin-left: 14px;
  white-space: pre;
}
.details-scroll {
  width: 13px;
  flex: none;
  display: flex;
  flex-direction: column;
  margin: 1px 1px 1px 0;
}
.sb-btn {
  height: 12px;
  border: 1px solid #aaa;
  background: #fff;
  display: flex;
  align-items: center;
  justify-content: center;
  box-sizing: border-box;
}
.sb-thumb {
  height: 14px;
  border: 1px solid #aaa;
  border-top: 0;
  box-sizing: border-box;
}
.sb-space { flex: 1; }
.opt-sec { margin-top: 5px; }
.opt {
  height: 15.500px;
}
.pane-sec + .opt { margin-top: 1px; }

/* status bar */
.status {
  height: 16px;
  flex: none;
  display: flex;
  align-items: center;
  background: #f3f2f1;
  font-size: 8.800px;
  color: #666;
  padding: 1px 0 0 6px;
  box-sizing: border-box;
}
.st-page { width: 61px; }
.st-words { width: 86px; }
.st-proof { margin-right: 14px; }
.st-right {
  margin-left: auto;
  display: flex;
  align-items: center;
  height: 15px;
}
.st-focus { margin-left: 2px; width: 34px; font-size: 9px; }
.view-btn {
  width: 32px;
  height: 16px;
  margin-top: -1px;
  display: flex;
  align-items: center;
  justify-content: center;
}
.v-print { background: #d2d2d2; }
.zoom-minus {
  width: 6px;
  height: 1px;
  background: #777;
  margin: 0 4px 0 6px;
}
.slider {
  width: 80px;
  height: 1px;
  background: #999;
  position: relative;
}
.thumb {
  position: absolute;
  left: 38px;
  top: -4px;
  width: 4px;
  height: 9px;
  background: #666;
}
.zoom-plus { margin-left: 6px; width: 15px; font-size: 10px; }
.zoom-val { width: 28px; font-size: 9px; }
.bottom-strip {
  height: 3px;
  flex: none;
  background: #2a2a2a;
}
</style>
